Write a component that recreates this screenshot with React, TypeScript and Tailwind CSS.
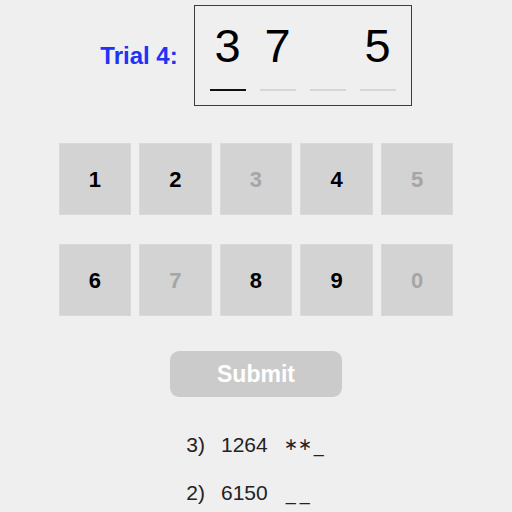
const slots = ["3", "7", "", "5"]
const keys = [
  { d: "1", off: false },
  { d: "2", off: false },
  { d: "3", off: true },
  { d: "4", off: false },
  { d: "5", off: true },
  { d: "6", off: false },
  { d: "7", off: true },
  { d: "8", off: false },
  { d: "9", off: false },
  { d: "0", off: true },
]
const history = [
  { n: "3)", guess: "1264", fb: ["∗", "∗", "_"] },
  { n: "2)", guess: "6150", fb: ["_", "_"] },
]

export default function App() {
  return (
    <div className="w-full h-[512px] overflow-hidden bg-[#efefef] font-['Liberation_Sans',Arial,sans-serif] text-black">
      <div className="flex items-center justify-center gap-4 pt-[5px]">
        <span className="text-[24px] font-bold text-[#1f32f6]">Trial 4:</span>
        <div className="w-[218px] h-[101px] border-[1.5px] border-[#3c3c3c] px-[15px] pt-[16px] flex gap-[14px]">
          {slots.map((s, i) => (
            <div key={i} className="w-[36px] flex flex-col items-center">
              <div className="h-[47px] text-[47px] leading-[47px]">{s}</div>
              <div className={`mt-[20px] w-full h-[2px] ${i === 0 ? "bg-[#111]" : "bg-[#d6d6d6]"}`} />
            </div>
          ))}
        </div>
      </div>

      <div className="mt-[37px] mx-auto w-[395px] grid grid-cols-5 gap-x-2 gap-y-[29px]">
        {keys.map((k) => (
          <button
            key={k.d}
            disabled={k.off}
            className={`h-[72px] bg-[#d3d3d3] border border-[#d9d9d9] text-[22px] font-bold ${k.off ? "text-[#a6a6a6]" : "text-black"}`}
          >
            {k.d}
          </button>
        ))}
      </div>

      <div className="mt-[35px] flex justify-center">
        <button disabled className="w-[172px] h-[46px] rounded-[9px] bg-[#cbcbcb] text-white text-[23px] font-bold">
          Submit
        </button>
      </div>

      <div className="mt-[24px] flex justify-center">
        <div className="flex flex-col items-start">
          {history.map((h) => (
            <div key={h.n} className="h-[48px] flex items-center gap-4 text-[21px] text-[#222]">
              <span>{h.n}</span>
              <span>{h.guess}</span>
              <span className="flex items-center">
                {h.fb.map((c, i) => (
                  <span
                    key={i}
                    className={`w-[14px] text-center font-['DejaVu_Sans',sans-serif] ${c === "_" ? "text-[20px]" : "text-[17px]"}`}
                  >
                    {c}
                  </span>
                ))}
              </span>
            </div>
          ))}
        </div>
      </div>
    </div>
  )
}
